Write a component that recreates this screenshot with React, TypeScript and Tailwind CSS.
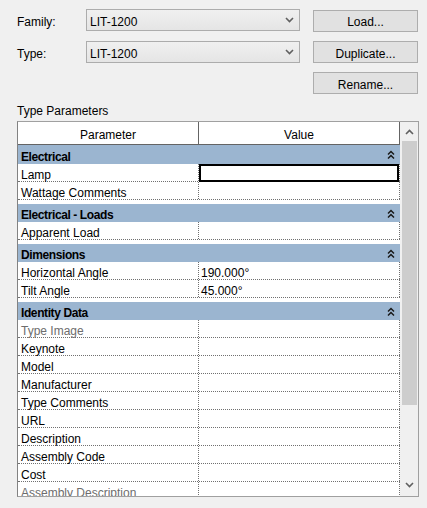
import React from 'react';

type Row = { name: string; value?: string; muted?: boolean; editing?: boolean };
type Group = { name: string; rows: Row[] };

const groups: Group[] = [
  {
    name: 'Electrical',
    rows: [{ name: 'Lamp', editing: true }, { name: 'Wattage Comments' }],
  },
  { name: 'Electrical - Loads', rows: [{ name: 'Apparent Load' }] },
  {
    name: 'Dimensions',
    rows: [
      { name: 'Horizontal Angle', value: '190.000°' },
      { name: 'Tilt Angle', value: '45.000°' },
    ],
  },
  {
    name: 'Identity Data',
    rows: [
      { name: 'Type Image', muted: true },
      { name: 'Keynote' },
      { name: 'Model' },
      { name: 'Manufacturer' },
      { name: 'Type Comments' },
      { name: 'URL' },
      { name: 'Description' },
      { name: 'Assembly Code' },
      { name: 'Cost' },
      { name: 'Assembly Description', muted: true },
    ],
  },
];

const DoubleUp = () => (
  <svg width="8" height="9" viewBox="0 0 8 9">
    <path d="M1 4.5 L4 1.5 L7 4.5 M1 8.5 L4 5.5 L7 8.5" stroke="#1a1a1a" strokeWidth="1.5" fill="none" />
  </svg>
);

const Caret = ({ up }: { up?: boolean }) => (
  <svg width="9" height="6" viewBox="0 0 9 6">
    <path d={up ? 'M1 5 L4.5 1.5 L8 5' : 'M1 1 L4.5 4.5 L8 1'} stroke="#606060" strokeWidth="1.6" fill="none" />
  </svg>
);

const Combo = ({ value }: { value: string }) => (
  <div className="w-[214px] h-[22px] flex items-center justify-between border border-[#acacac] bg-gradient-to-b from-[#f0f0f0] to-[#e5e5e5] pl-[3px] pr-[5px]">
    <span className="pt-[3px]">{value}</span>
    <Caret />
  </div>
);

const Btn = ({ label }: { label: string }) => (
  <div className="w-[105px] h-[22px] flex items-center justify-center border border-[#adadad] bg-[#e1e1e1] pt-[3px]">
    {label}
  </div>
);

const App: React.FC = () => {
  return (
    <div className="w-[427px] h-[508px] bg-[#f0f0f0] text-[12px] text-black overflow-hidden" style={{ fontFamily: '"Liberation Sans", Arial, sans-serif' }}>
      <div className="pl-[17px] pt-[9px]">
        <div className="flex items-center h-[22px]">
          <span className="w-[69px] pt-[3px]">Family:</span>
          <Combo value="LIT-1200" />
          <div className="ml-[13px] mt-[1px]">
            <Btn label="Load..." />
          </div>
        </div>
        <div className="flex items-center h-[22px] mt-[10px]">
          <span className="w-[69px] pt-[3px]">Type:</span>
          <Combo value="LIT-1200" />
          <div className="ml-[13px]">
            <Btn label="Duplicate..." />
          </div>
        </div>
        <div className="flex h-[22px] mt-[9px] pl-[296px]">
          <Btn label="Rename..." />
        </div>
        <div className="mt-[7px] h-[14px] leading-[14px] pt-[3px]">Type Parameters</div>

        <div className="mt-[6px] w-[402px] h-[376px] border border-[#a0a0a0] border-l-[#828282] flex overflow-hidden">
          <div className="w-[382px] bg-white">
            <div className="flex h-[23px] border-b border-[#646464]">
              <div className="w-[181px] flex items-center justify-center border-r border-[#646464] pt-[3px]">Parameter</div>
              <div className="flex-1 flex items-center justify-center border-r border-[#646464] pt-[3px]">Value</div>
            </div>
            {groups.map((g, gi) => (
              <div key={g.name}>
                <div className={`${gi === 0 ? 'h-[19px]' : 'h-[18px] mt-[4px]'} bg-[#9bb5d0] flex items-center justify-between pl-[3px] pr-[5px] font-bold tracking-[-0.4px]`}>
                  <span className="pt-[4px]">{g.name}</span>
                  <DoubleUp />
                </div>
                {g.rows.map((r) => (
                  <div key={r.name} className="flex h-[18px] border-b border-dotted border-[#707070]">
                    <div className={`w-[181px] pl-[3px] pt-[4px] flex items-center border-r border-dotted border-[#707070] ${r.muted ? 'text-[#6d6d6d]' : ''}`}>
                      {r.name}
                    </div>
                    <div className="flex-1 border-r border-dotted border-[#707070] flex items-center">
                      {r.editing ? (
                        <div className="w-full h-[18px] border-2 border-black bg-white" />
                      ) : (
                        <span className="pl-[2px] pt-[4px]">{r.value ?? ''}</span>
                      )}
                    </div>
                  </div>
                ))}
              </div>
            ))}
          </div>
          <div className="w-[18px] bg-[#f0f0f0] flex flex-col items-center">
            <div className="h-[17px] flex items-center justify-center mt-[1px]">
              <Caret up />
            </div>
            <div className="w-[15px] h-[264px] bg-[#cdcdcd] mt-[1px]" />
            <div className="flex-1" />
            <div className="h-[17px] flex items-center justify-center mb-[3px]">
              <Caret />
            </div>
          </div>
        </div>
      </div>
    </div>
  );
};

export default App;
